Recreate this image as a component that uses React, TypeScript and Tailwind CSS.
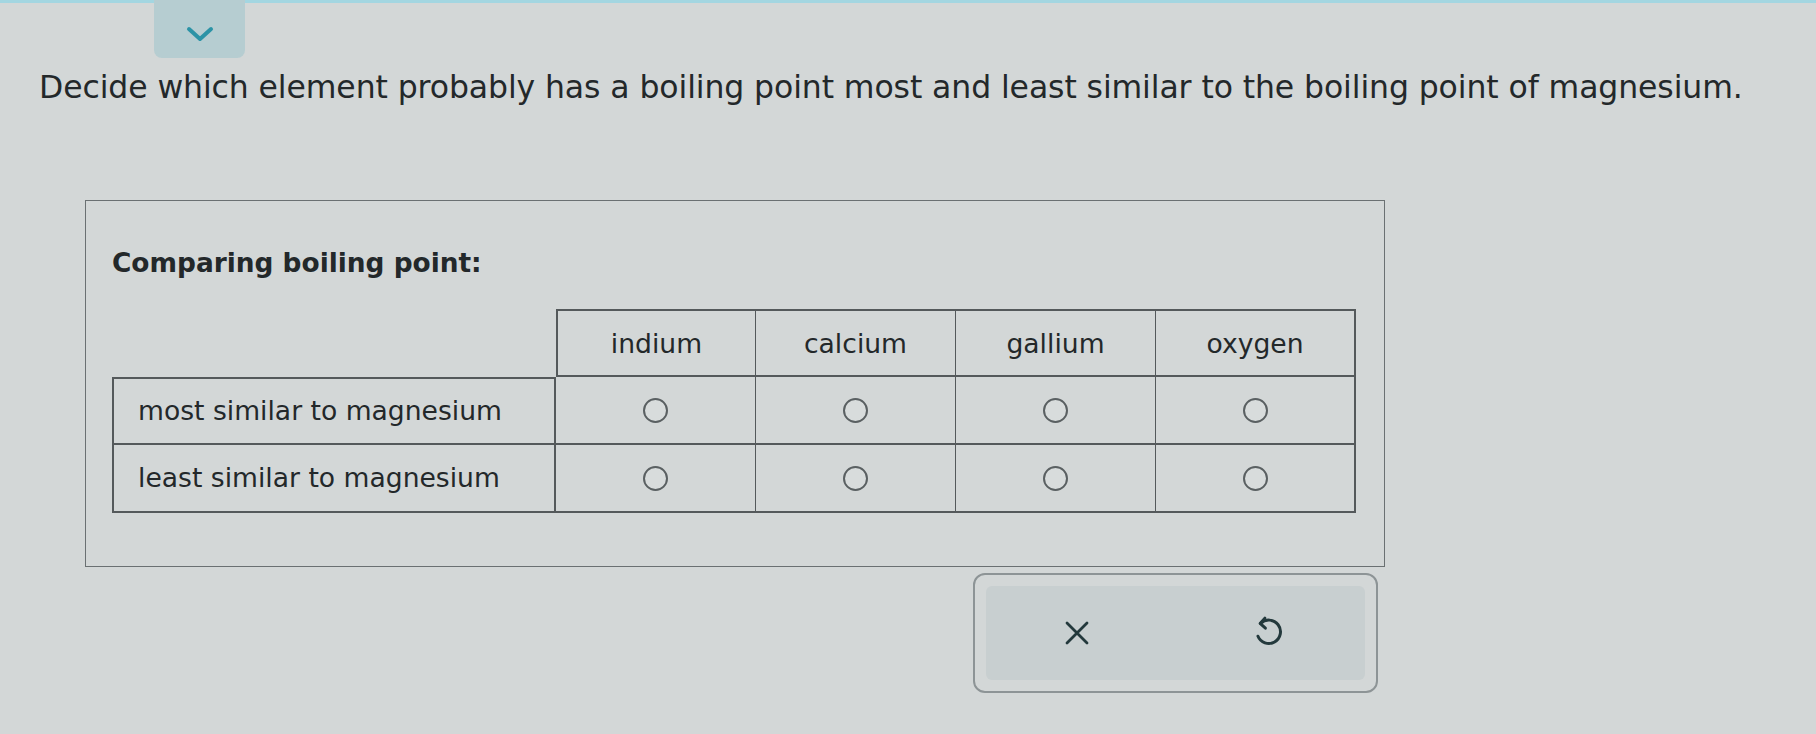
import React from "react";

const cols = ["indium", "calcium", "gallium", "oxygen"];
const rows = ["most similar to magnesium", "least similar to magnesium"];

function Radio() {
  return <span className="inline-block w-[25px] h-[25px] rounded-full border-[2px] border-[#5a6062] bg-[#d8dcdc]" />;
}

export default function App() {
  return (
    <div className="w-[1816px] h-[734px] bg-[#d3d7d7] text-[#23282a] overflow-hidden relative" style={{ fontFamily: '"DejaVu Sans", Verdana, sans-serif' }}>
      <div className="h-[3px] bg-[#a3d6e1] w-full" />
      <div className="pl-[154px]">
        <div className="w-[91px] h-[58px] -mt-[3px] bg-[#b6cdd1] rounded-b-[8px] flex items-center justify-center">
          <svg width="30" height="18" viewBox="0 0 30 18" className="mt-[10px]">
            <path d="M4 4 L15 14 L26 4" fill="none" stroke="#2b93a6" strokeWidth="4" strokeLinecap="round" strokeLinejoin="round" />
          </svg>
        </div>
      </div>
      <div className="pl-[39px] mt-[9px] text-[31.5px] leading-[40px] tracking-[-0.1px]">
        Decide which element probably has a boiling point most and least similar to the boiling point of magnesium.
      </div>
      <div className="ml-[85px] mt-[93px] w-[1300px] h-[367px] border border-[#6a7072] pt-[46px] pl-[26px] pr-[28px]">
        <div className="font-bold text-[26.4px] leading-[32px]">Comparing boiling point:</div>
        <div className="mt-[30px] grid grid-cols-[444px_200px_200px_200px_200px] text-[26.6px]">
          <div className="h-[68px]" />
          {cols.map((c, i) => (
            <div key={c} className={`h-[68px] flex items-center justify-center border-t-2 border-b-2 border-r border-[#54595b] ${i === 0 ? "border-l-2" : ""} ${i === 3 ? "border-r-2" : ""}`}>
              <span className="mt-[2px]">{c}</span>
            </div>
          ))}
          {rows.map((r, ri) => (
            <React.Fragment key={r}>
              <div className={`h-[68px] flex items-center pl-[24px] border-l-2 border-r-2 border-b-2 border-[#54595b] ${ri === 0 ? "border-t-2" : ""}`}>
                {r}
              </div>
              {cols.map((c, i) => (
                <div key={c} className={`h-[68px] flex items-center justify-center border-b-2 border-r border-[#54595b] ${i === 3 ? "border-r-2" : ""}`}>
                  <Radio />
                </div>
              ))}
            </React.Fragment>
          ))}
        </div>
      </div>
      <div className="ml-[973px] mt-[6px] w-[405px] h-[120px] rounded-[12px] border-2 border-[#8d9496] p-[11px]">
        <div className="h-full rounded-[6px] bg-[#c8cfd0] flex items-center">
          <div className="w-1/2 flex justify-center pr-[8px]">
            <svg width="28" height="28" viewBox="0 0 28 28">
              <path d="M4 4 L24 24 M24 4 L4 24" stroke="#23393c" strokeWidth="2.8" strokeLinecap="round" />
            </svg>
          </div>
          <div className="w-1/2 flex justify-center pr-[6px]">
            <svg width="32" height="34" viewBox="0 0 30 32">
              <path d="M9 7 A11 11 0 1 1 6.5 19" fill="none" stroke="#23393c" strokeWidth="2.8" strokeLinecap="round" />
              <path d="M13 2 L8.5 7 L13.5 11.5" fill="none" stroke="#23393c" strokeWidth="2.8" strokeLinecap="round" strokeLinejoin="round" />
            </svg>
          </div>
        </div>
      </div>
    </div>
  );
}
